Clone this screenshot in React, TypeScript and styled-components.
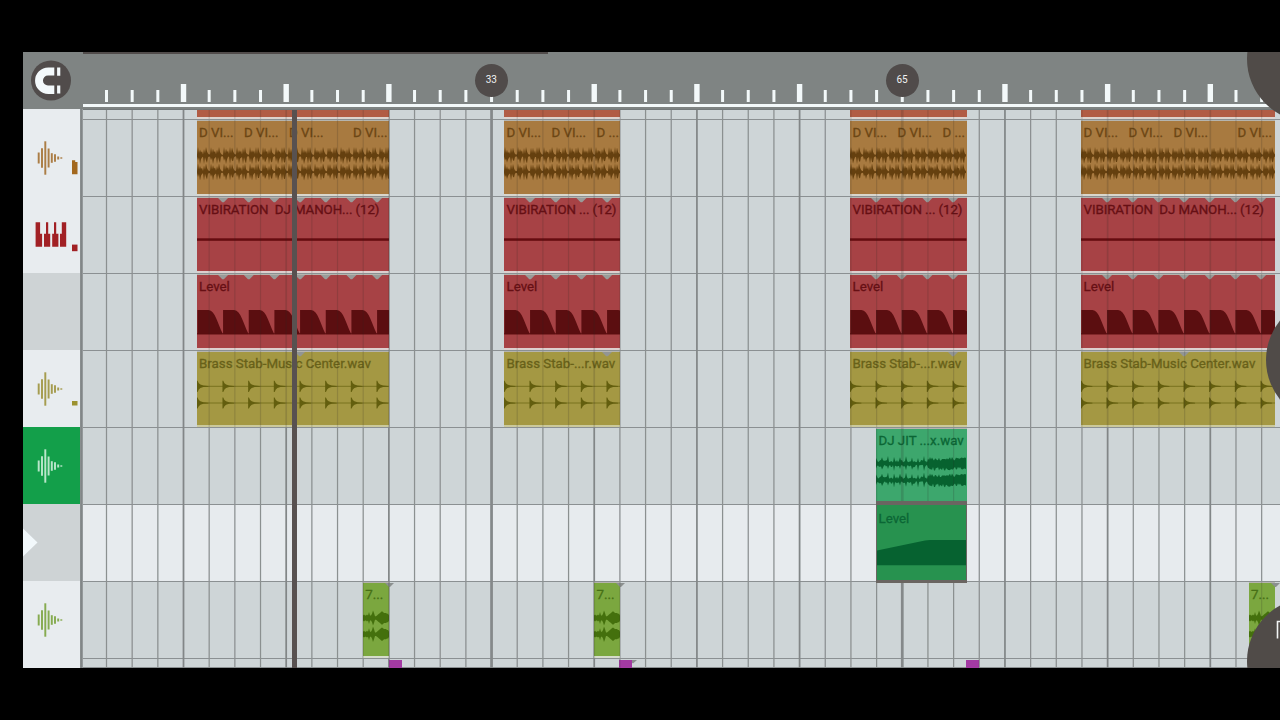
import React from "react";
import styled, { createGlobalStyle } from "styled-components";

const GlobalStyle = createGlobalStyle`
  * { box-sizing: border-box; }
  body { margin: 0; background: #000; font-family: Roboto, "Liberation Sans", sans-serif; }
`;

const BAR = 25.67;
const LANE_WIDTH = 1197;
const FIRST_LINE = 23.5;

const Screen = styled.main`
  width: 1280px;
  height: 720px;
  padding: 52px 0 52px 23px;
  background: #000;
  overflow: hidden;
`;

const Workspace = styled.div`
  position: relative;
  display: flex;
  flex-direction: column;
  height: 616px;
  overflow: hidden;
`;

const Header = styled.header`
  display: flex;
  height: 57px;
  flex: none;
  background: #7f8483;
`;

const HeaderCorner = styled.div`
  width: 60px;
  padding: 8px 0 0 8px;
`;

const SnapButton = styled.button`
  display: block;
  width: 40px;
  height: 41px;
  padding: 0;
  border: 0;
  background: none;
`;

const Ruler = styled.div`
  position: relative;
  flex: 1;
  display: flex;
  flex-direction: column;
`;

const ScrollThumb = styled.div`
  width: 465px;
  height: 2px;
  background: #514c4b;
`;

const TickArt = styled.svg`
  display: block;
  height: 50px;
`;

const RulerLine = styled.div`
  height: 3px;
  background: #f3f9fa;
`;

const BarBadge = styled.div<{ $x: number }>`
  position: absolute;
  left: ${(p) => p.$x - 16.5}px;
  top: 12px;
  width: 33px;
  height: 33px;
  border-radius: 50%;
  background: #504b4a;
  color: #f0f2f2;
  font-size: 10px;
  line-height: 32px;
  text-align: center;
`;

const Body = styled.div`
  display: flex;
  flex: 1;
  min-height: 0;
`;

const Sidebar = styled.aside`
  display: flex;
  flex-direction: column;
  width: 57px;
  flex: none;
`;

const tones = { light: "#e8ecef", grey: "#ced3d5", green: "#139f4a" };

const TrackHead = styled.div<{ $h: number; $tone: keyof typeof tones }>`
  height: ${(p) => p.$h}px;
  flex: none;
  background: ${(p) => tones[p.$tone]};
`;

const HeadArt = styled.svg`
  display: block;
`;

const Divider = styled.div`
  width: 3px;
  flex: none;
  background: linear-gradient(90deg, #8d9293, #7f8485 60%, #a3a8aa);
`;

const Timeline = styled.div`
  position: relative;
  display: flex;
  flex-direction: column;
  flex: 1;
  border-top: 1px solid #747a7b;
`;

const Lane = styled.div<{ $h?: number; $active?: boolean }>`
  position: relative;
  height: ${(p) => p.$h ?? 77}px;
  flex: none;
  border-bottom: 1px solid #8b9092;
  background: ${(p) => (p.$active ? "#e7ebee" : "#ced5d7")};
`;

const GridArt = styled.svg<{ $front?: boolean }>`
  position: absolute;
  left: 0;
  top: 0;
  z-index: ${(p) => (p.$front ? 2 : 0)};
  opacity: ${(p) => (p.$front ? 0.17 : 1)};
  pointer-events: none;
`;

const ClipBox = styled.div<{ $x: number; $w: number; $edge?: string }>`
  position: absolute;
  z-index: 1;
  left: ${(p) => p.$x}px;
  top: 0;
  width: ${(p) => p.$w}px;
  height: 76px;
  border-top: 1px solid #b5b4ae;
  border-bottom: 2px solid ${(p) => p.$edge ?? "#dad6cc"};
`;

const ClipFill = styled.div<{ $bg: string }>`
  display: flex;
  height: 73px;
  padding: 3px 0 0 2.5px;
  background: ${(p) => p.$bg};
`;

const ClipArt = styled.svg<{ $spill?: boolean }>`
  position: absolute;
  left: 0;
  top: -1px;
  overflow: ${(p) => (p.$spill ? "visible" : "hidden")};
`;

const ClipLabel = styled.span<{ $c: string; $w?: number; $tight?: boolean }>`
  flex: none;
  width: ${(p) => (p.$w ? `${p.$w}px` : "auto")};
  color: ${(p) => p.$c};
  font-size: 13.3px;
  font-weight: 400;
  line-height: 17px;
  letter-spacing: ${(p) => (p.$tight ? "-0.08px" : "0")};
  white-space: pre;
  -webkit-text-stroke: 0.3px ${(p) => p.$c};
`;

const SelectedClip = styled.div`
  position: absolute;
  z-index: 3;
  left: 793px;
  top: -4px;
  width: 91px;
  height: 82px;
  padding: 3px 0 0 1.5px;
  border: solid #6a6561;
  border-width: 4px 1px 3px;
  background: #27924f;
`;

const Sliver = styled.div<{ $x: number; $w: number; $c: string; $top?: number }>`
  position: absolute;
  z-index: 1;
  left: ${(p) => p.$x}px;
  top: ${(p) => p.$top ?? 0}px;
  width: ${(p) => p.$w}px;
  height: ${(p) => (p.$top ? 8 : 9)}px;
  background: ${(p) => p.$c};
  border-bottom: ${(p) => (p.$top ? "0" : "2px solid #ddd3ce")};
`;

const Playhead = styled.div`
  position: absolute;
  z-index: 4;
  left: 209px;
  top: 0;
  bottom: 0;
  width: 5px;
  background: #585150;
`;

const RoundButton = styled.div<{ $x: number; $y: number }>`
  position: absolute;
  z-index: 5;
  left: ${(p) => p.$x}px;
  top: ${(p) => p.$y}px;
  width: 126px;
  height: 126px;
  border-radius: 50%;
  background: #504b48;
`;

/* Deterministic noise so that the wave forms are the same on every render. */
const noise = (n: number) => {
  const v = Math.sin(n * 127.1 + 11.7) * 43758.5453;
  return v - Math.floor(v);
};

function wavePath(w: number, mid: number, amp: (x: number) => [number, number]) {
  const up: string[] = [];
  const down: string[] = [];
  for (let x = 0; x <= w; x += 1) {
    const [a, b] = amp(x);
    up.push(`${x},${(mid - a).toFixed(1)}`);
    down.unshift(`${x},${(mid + b).toFixed(1)}`);
  }
  return `M${up.join("L")}L${down.join("L")}Z`;
}

const drumShape: [number, number][] = [
  [1, 1], [10, 6], [2.5, 2.5], [7, 9], [3, 4], [4.5, 2], [1.2, 1.2],
  [8, 10], [2, 2], [10.5, 6], [4, 7], [2, 1.5], [1, 1],
];

const drumAmp = (seed: number) => (x: number): [number, number] => {
  const [a, b] = drumShape[x % 13];
  return [
    Math.min(8.5, a * (0.75 + noise(x + seed) * 0.45)),
    Math.min(8.5, b * (0.75 + noise(x * 3 + seed) * 0.45)),
  ];
};

const mixAmp = (seed: number) => (x: number): [number, number] => {
  if (x > 51) return [3 + noise(x + seed) * 4, 3 + noise(x * 3 + seed) * 4];
  const hit = x % 6 < 1 ? 4.5 : 0;
  return [1 + hit + noise(x + seed) * 2.8, 1 + hit * 0.8 + noise(x * 3 + seed) * 2.8];
};

const voxShape = [3, 4, 3, 3, 4, 3, 7, 3, 3, 5, 9, 6, 2, 2, 3, 4, 5, 6, 7, 8, 7, 6, 6, 6, 5, 5, 3];
const voxAmp = (x: number): [number, number] => {
  const v = voxShape[x] ?? 2;
  return [v * 0.85, v * 0.85];
};

function bars(w: number, from = 0.4) {
  const list: number[] = [];
  for (let x = from; x < w - 2; x += BAR) list.push(x);
  return list;
}

function Notches({ at, color = "#999b99" }: { at: number[]; color?: string }) {
  return (
    <>
      {at.map((x) => (
        <path key={x} d={`M${x - 5} 1h10l-4.2 4.2h-1.6z`} fill={color} />
      ))}
    </>
  );
}

function GridLines({ front = false }: { front?: boolean }) {
  return (
    <GridArt width={LANE_WIDTH} height={558} $front={front}>
      {Array.from({ length: 46 }, (_, i) => {
        const major = (i - 15) % 16 === 0;
        const mid = (i - 15) % 4 === 0;
        return (
          <line
            key={i}
            x1={FIRST_LINE + i * BAR}
            x2={FIRST_LINE + i * BAR}
            y1={0}
            y2={558}
            stroke={front ? "#2a2622" : major ? "#989ea0" : mid ? "#959b9d" : "#a0a6a8"}
            strokeWidth={major ? 2.7 : mid ? 1.7 : 1.2}
          />
        );
      })}
    </GridArt>
  );
}

type Label = { text: string; w: number };
type Block = { x: number; w: number; drums: Label[]; midi: string; brass: string };

const longDrums: Label[] = [
  { text: "D VI...", w: 45 },
  { text: "D VI...", w: 45 },
  { text: "D VI...", w: 64 },
  { text: "D VI...", w: 36 },
];
const shortDrums: Label[] = [
  { text: "D VI...", w: 45 },
  { text: "D VI...", w: 45 },
  { text: "D ...", w: 25 },
];

const blocks: Block[] = [
  { x: 113.5, w: 192.5, drums: longDrums, midi: "VIBIRATION  DJ MANOH... (12)", brass: "Brass Stab-Music Center.wav" },
  { x: 421, w: 116, drums: shortDrums, midi: "VIBIRATION ... (12)", brass: "Brass Stab-...r.wav" },
  { x: 767, w: 116.5, drums: shortDrums, midi: "VIBIRATION ... (12)", brass: "Brass Stab-...r.wav" },
  { x: 998, w: 194, drums: longDrums, midi: "VIBIRATION  DJ MANOH... (12)", brass: "Brass Stab-Music Center.wav" },
];

function DrumClip({ x, w, drums }: Block) {
  return (
    <ClipBox $x={x} $w={w}>
      <ClipFill $bg="#a87a40">
        {drums.map((d, i) => (
          <ClipLabel key={i} $w={d.w} $c="#6c4614">{d.text}</ClipLabel>
        ))}
      </ClipFill>
      <ClipArt width={w} height={76}>
        <path d={wavePath(w, 35.5, drumAmp(x))} fill="#65400f" />
        <path d={wavePath(w, 52, drumAmp(x))} fill="#65400f" />
      </ClipArt>
    </ClipBox>
  );
}

function MidiClip({ x, w, midi }: Block) {
  return (
    <ClipBox $x={x} $w={w} $edge="#ddcfce">
      <ClipFill $bg="#a74245">
        <ClipLabel $tight $c="#660f14">{midi}</ClipLabel>
      </ClipFill>
      <ClipArt width={w} height={76}>
        <rect x={0} y={41.3} width={w} height={2.5} fill="#650c10" />
        <Notches at={bars(w, BAR + 0.4)} />
      </ClipArt>
    </ClipBox>
  );
}

function DuckClip({ x, w }: Block) {
  return (
    <ClipBox $x={x} $w={w} $edge="#ddcfce">
      <ClipFill $bg="#a74245">
        <ClipLabel $c="#660f14">Level</ClipLabel>
      </ClipFill>
      <ClipArt width={w} height={76}>
        {bars(w).map((b) => (
          <path key={b} d={`M${b} 36h11C${b + 18} 37 ${b + 20} 49 ${b + 25.2} 59.5V60.3H${b}z`} fill="#5b0e10" />
        ))}
        <rect x={0} y={59.3} width={w} height={1} fill="#5b0e10" />
        <Notches at={bars(w, BAR + 0.4)} />
      </ClipArt>
    </ClipBox>
  );
}

function BrassClip({ x, w, brass }: Block) {
  return (
    <ClipBox $x={x} $w={w} $edge="#cbc99c">
      <ClipFill $bg="#a49843">
        <ClipLabel $c="#686119">{brass}</ClipLabel>
      </ClipFill>
      <ClipArt width={w} height={76}>
        {[35.3, 52].map((y) => (
          <React.Fragment key={y}>
            <rect x={0} y={y - 0.5} width={w} height={1} fill="#79721f" />
            {bars(w).map((b) => (
              <path key={b} d={`M${b - 0.6} ${y - 5.5}h.8l1.2 2.4 1.6 1.4 3 1 5 .4v.7l-5 .4-3 1-1.6 1.4-1.2 2.4h-.8z`} fill="#635e0e" />
            ))}
          </React.Fragment>
        ))}
        <Notches at={[103]} color="#929593" />
      </ClipArt>
    </ClipBox>
  );
}

function VoxClip({ x }: { x: number }) {
  return (
    <ClipBox $x={x} $w={26.2} $edge="#d5dccb">
      <ClipFill $bg="#7ba73f">
        <ClipLabel $c="#466f16">7...</ClipLabel>
      </ClipFill>
      <ClipArt width={26} height={76} $spill>
        <path d={wavePath(26, 36, voxAmp)} fill="#44700d" />
        <path d={wavePath(26, 52.2, voxAmp)} fill="#44700d" />
        <path d="M22 1h9l-4 4h-1z" fill="#8b908f" />
      </ClipArt>
    </ClipBox>
  );
}

const waveBars: [number, number][] = [[15.7, 5.5], [19, 9.7], [22.3, 16.7], [25.6, 9.5], [28.8, 4.8], [32, 3.8], [35.2, 1.5], [38.3, 0.7]];

function WaveIcon({ y, color }: { y: number; color: string }) {
  return (
    <g stroke={color} strokeWidth={1.95}>
      {waveBars.map(([x, h]) => (
        <line key={x} x1={x} x2={x} y1={y - h} y2={y + h} />
      ))}
    </g>
  );
}

export default function App() {
  return (
    <Screen>
      <GlobalStyle />
      <Workspace>
        <Header>
          <HeaderCorner>
            <SnapButton aria-label="Snap to grid">
              <svg width="40" height="41" viewBox="31 60 40 41">
                <circle cx="51" cy="80.5" r="20" fill="#514c4b" />
                <path d="M54.3 67.4H48.3a13.25 13.25 0 0 0 0 26.5H54.3V85.6H48a5 5 0 0 1 0-10.1H54.3z" fill="#f3f9fb" />
                <path d="M57.1 67.6h3.2v8.2h-3.2zM57.1 85.4h3.2v8.2h-3.2z" fill="#f3f9fb" />
              </svg>
            </SnapButton>
          </HeaderCorner>
          <Ruler>
            <ScrollThumb />
            <TickArt width={LANE_WIDTH} height={50}>
              {Array.from({ length: 46 }, (_, i) => {
                const big = (i - 15) % 4 === 0 && (i - 15) % 16 !== 0;
                const w = big ? 5.4 : 3;
                return <rect key={i} x={FIRST_LINE + i * BAR - w / 2} y={big ? 30 : 36} width={w} height={big ? 18 : 12} fill="#f3f9fa" />;
              })}
            </TickArt>
            <RulerLine />
            <BarBadge $x={408.3}>33</BarBadge>
            <BarBadge $x={819}>65</BarBadge>
          </Ruler>
        </Header>
        <Body>
          <Sidebar>
            <TrackHead $h={87} $tone="light">
              <HeadArt width="57" height="87">
                <WaveIcon y={49} color="#ab7d45" />
                <path d="M49 51.3h3.2v1.6h2.3v12.3h-5.5z" fill="#a2671d" />
              </HeadArt>
            </TrackHead>
            <TrackHead $h={77} $tone="light">
              <HeadArt width="57" height="77">
                <path d="M12.6 26.3h4.5v11.4h2V50.7h-6.5zM23 26.3h2.2v11.4h2V50.7h-6.2V37.7h2zM31 26.3h2.2v11.4h2.2V50.7h-6.2V37.7h1.8zM38.8 26.3h4.4V50.7h-6.2V37.7h1.8z" fill="#a12024" />
                <rect x="49" y="48.6" width="5.5" height="6.6" fill="#a12024" />
              </HeadArt>
            </TrackHead>
            <TrackHead $h={77} $tone="grey" />
            <TrackHead $h={77} $tone="light">
              <HeadArt width="57" height="77">
                <WaveIcon y={39} color="#a59c4f" />
                <rect x="49" y="51" width="5.5" height="4.5" fill="#9c9230" />
              </HeadArt>
            </TrackHead>
            <TrackHead $h={77} $tone="green">
              <HeadArt width="57" height="77">
                <WaveIcon y={39} color="#b9e6ca" />
              </HeadArt>
            </TrackHead>
            <TrackHead $h={77} $tone="grey">
              <HeadArt width="57" height="77">
                <path d="M0 24.5L14.5 38.5L0 52.5z" fill="#f2f8fb" />
              </HeadArt>
            </TrackHead>
            <TrackHead $h={87} $tone="light">
              <HeadArt width="57" height="87">
                <WaveIcon y={39} color="#86ab50" />
              </HeadArt>
            </TrackHead>
          </Sidebar>
          <Divider />
          <Timeline>
            <Lane $h={10}>
              {blocks.map((b) => <Sliver key={b.x} $x={b.x} $w={b.w} $c="#b15c45" />)}
            </Lane>
            <Lane>{blocks.map((b) => <DrumClip key={b.x} {...b} />)}</Lane>
            <Lane>{blocks.map((b) => <MidiClip key={b.x} {...b} />)}</Lane>
            <Lane>{blocks.map((b) => <DuckClip key={b.x} {...b} />)}</Lane>
            <Lane>{blocks.map((b) => <BrassClip key={b.x} {...b} />)}</Lane>
            <Lane>
              <ClipBox $x={793} $w={90.7}>
                <ClipFill $bg="#3da76d">
                  <ClipLabel $c="#0b6635">DJ JIT ...x.wav</ClipLabel>
                </ClipFill>
                <ClipArt width={91} height={76}>
                  <path d={wavePath(90, 35.7, mixAmp(3))} fill="#07622f" />
                  <path d={wavePath(90, 52.2, mixAmp(3))} fill="#07622f" />
                </ClipArt>
              </ClipBox>
            </Lane>
            <Lane $active>
              <SelectedClip>
                <ClipLabel $c="#0b6635">Level</ClipLabel>
                <ClipArt width={89} height={74}>
                  <path d="M0 46.5L48 36.5Q50 36 53 36H89V61.3H0z" fill="#066230" />
                </ClipArt>
              </SelectedClip>
            </Lane>
            <Lane>
              <VoxClip x={279.8} />
              <VoxClip x={511} />
              <VoxClip x={1165.5} />
            </Lane>
            <Lane $h={9}>
              <Sliver $x={306} $w={12.7} $c="#a33aa2" $top={1} />
              <Sliver $x={536.4} $w={12.7} $c="#a33aa2" $top={1} />
              <Sliver $x={883.4} $w={12.5} $c="#a33aa2" $top={1} />
              <ClipArt width={600} height={9}>
                <path d="M545 2h9l-4 3.5z" fill="#8b908f" />
              </ClipArt>
            </Lane>
            <GridLines />
            <GridLines front />
            <Playhead />
          </Timeline>
        </Body>
        <RoundButton $x={1224} $y={-56} />
        <RoundButton $x={1243} $y={245} />
        <RoundButton $x={1224} $y={546}>
          <svg width="126" height="126">
            <path d="M30.5 40.5V23.5H50" fill="none" stroke="#f2f4f4" strokeWidth="1.6" />
          </svg>
        </RoundButton>
      </Workspace>
    </Screen>
  );
}
